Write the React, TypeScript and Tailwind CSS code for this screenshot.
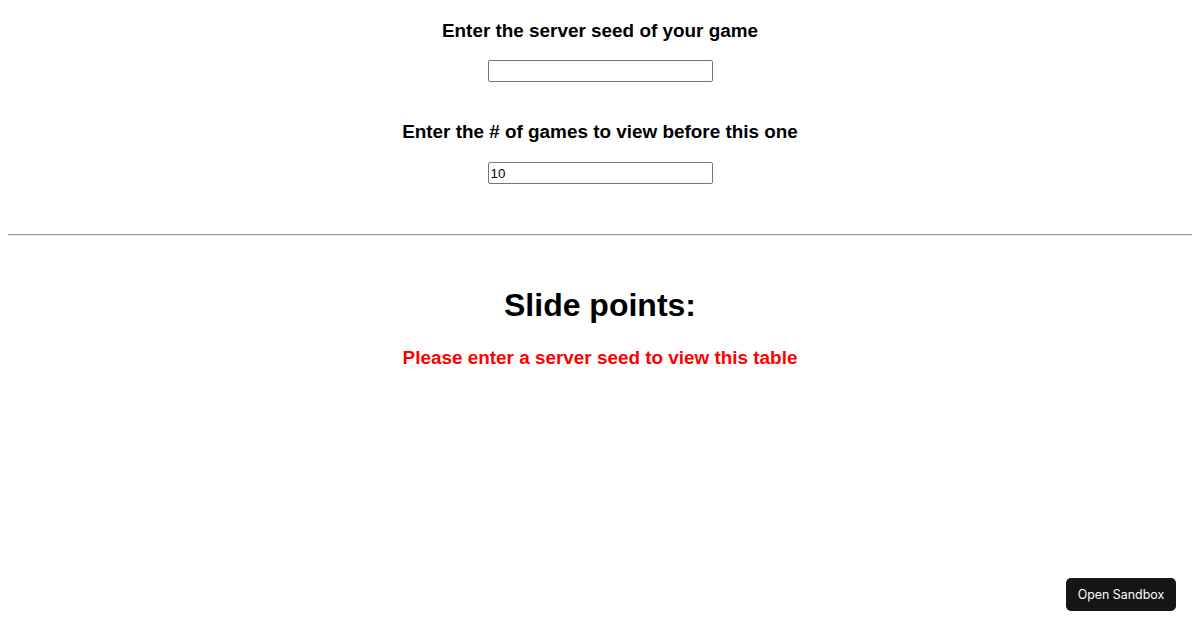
import React, { useState } from "react";

const App: React.FC = () => {
  const [seed, setSeed] = useState("");
  const [count, setCount] = useState("10");

  return (
    <div className="min-h-[630px] bg-white px-2 text-black font-['Liberation_Sans',Arial,sans-serif]">
      <div className="flex flex-col items-center text-center">
        <h3 className="mt-[20px] text-[18.9px] font-bold leading-[22px]">
          Enter the server seed of your game
        </h3>
        <input
          value={seed}
          onChange={(e) => setSeed(e.target.value)}
          className="mt-[18px] h-[22px] w-[225px] rounded-[2px] border border-[#767676] px-[2px] text-[13.33px] outline-none"
        />

        <h3 className="mt-[39px] text-[18.9px] font-bold leading-[22px]">
          Enter the # of games to view before this one
        </h3>
        <input
          value={count}
          onChange={(e) => setCount(e.target.value)}
          className="mt-[19px] h-[22px] w-[225px] rounded-[2px] border border-[#767676] px-[2px] text-[13.33px] outline-none"
        />
      </div>

      <hr className="mt-[50px] h-0 border-t border-b border-t-[#9a9a9a] border-b-[#eeeeee]" />

      <div className="flex flex-col items-center text-center">
        <h1 className="mt-[51px] text-[32px] font-bold leading-[37px]">
          Slide points:
        </h1>
        <h3 className="mt-[23px] text-[18.9px] font-bold leading-[22px] text-[#ff0000]">
          {seed ? "" : "Please enter a server seed to view this table"}
        </h3>
      </div>

      {/* sandbox badge */}
      <button className="fixed bottom-[19px] right-[24px] flex h-[33px] w-[110px] items-center justify-center rounded-[5px] bg-[#151515] pt-[2px] text-[12.4px] text-white font-['Inter',sans-serif]">
        Open Sandbox
      </button>
    </div>
  );
};

export default App;
